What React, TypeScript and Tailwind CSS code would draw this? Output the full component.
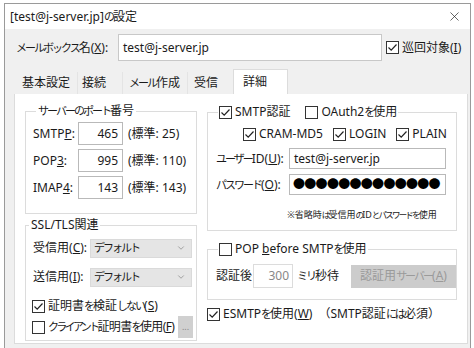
import { ChevronDown, X } from "lucide-react";

const FONT = "font-['Noto_Sans','Noto_Sans_CJK_JP',sans-serif]";
const KANA = "text-[11px] tracking-[-2px]";

// kana runs are drawn narrower, as in the Meiryo UI dialog font
function J({ t, k = KANA }: { t: string; k?: string }) {
  const parts = t.split(/([\u3040-\u30ff]+)/);
  return (
    <>
      {parts.map((p, i) =>
        i % 2 ? (
          <span key={i} className={k}>
            {p}
          </span>
        ) : (
          p
        )
      )}
    </>
  );
}

function Check({ on }: { on?: boolean }) {
  return (
    <span className="w-[13px] h-[13px] border border-[#333] bg-white flex items-center justify-center shrink-0">
      {on && (
        <svg width="11" height="11" viewBox="0 0 11 11">
          <path d="M1.5 5.5 L4.2 8.2 L9.5 2.5" fill="none" stroke="#222" strokeWidth="1.2" />
        </svg>
      )}
    </span>
  );
}

function CheckLabel({ on, children, className = "" }: { on?: boolean; children: React.ReactNode; className?: string }) {
  return (
    <span className={`flex items-center gap-[3px] ${className}`}>
      <Check on={on} />
      <span>{children}</span>
    </span>
  );
}

const PORTS = [
  { label: "SMTP", key: "P", value: "465", std: "25" },
  { label: "POP", key: "3", value: "995", std: "110" },
  { label: "IMAP", key: "4", value: "143", std: "143" },
];

const TABS = [
  { t: "基本設定", cls: "w-[62px] pl-[7px]" },
  { t: "接続", cls: "w-[45px] pl-[4px] border-l" },
  { t: "メール作成", cls: "w-[65px] pl-[6px] border-l" },
  { t: "受信", cls: "w-[46px] pl-[6px] border-l" },
];

function Select({ label, accel }: { label: string; accel: string }) {
  return (
    <div className="flex items-center h-[24px]">
      <span className="w-[64px] pl-[7px]">
        {label}(<u>{accel}</u>):
      </span>
      <div className="flex-1 h-[19px] bg-[#e5e5e5] border border-[#dadada] flex items-center justify-between pl-[3px] pr-[5px]">
        <span>
          <J t="デフォルト" />
        </span>
        <ChevronDown size={10} strokeWidth={1.5} className="text-[#777]" />
      </div>
    </div>
  );
}

export default function App() {
  return (
    <div
      className={`w-[474px] h-[348px] bg-white overflow-hidden pt-[3px] pl-[4px] text-[12px] leading-[16px] whitespace-nowrap text-[#1a1a1a] ${FONT}`}
    >
      <div className="w-[467px] h-[360px] border border-[#9a9a9a] flex flex-col">
        {/* title bar */}
        <div className="h-[25px] shrink-0 bg-white flex items-center justify-between pl-[5px] pr-[8px]">
          <span>
            <J t="[test@j-server.jp]の設定" />
          </span>
          <X size={15} strokeWidth={1.1} className="text-[#222]" />
        </div>

        <div className="flex-1 bg-[#f0f0f0] pl-[10px] pr-[2px] pt-[5px]">
          {/* mailbox name */}
          <div className="flex items-center">
            <span className="w-[103px] pl-[1px]">
              <J t="メールボックス名" />(<u>X</u>):
            </span>
            <div className="w-[264px] h-[27px] bg-white border border-[#c8c8c8] flex items-center pl-[4px]">
              test@j-server.jp
            </div>
            <CheckLabel on className="ml-[4px]">
              巡回対象(<u>I</u>)
            </CheckLabel>
          </div>

          {/* tabs */}
          <div className="flex items-end h-[25px] mt-[8px]">
            {TABS.map((tab) => (
              <div key={tab.t} className={`h-[22px] flex items-center border-[#e4e4e4] ${tab.cls}`}>
                <J t={tab.t} />
              </div>
            ))}
            <div className="h-[25px] w-[55px] bg-white flex items-center pl-[9px] border-t border-x border-[#dcdcdc]">
              詳細
            </div>
          </div>

          {/* panel */}
          <div className="h-[250px] -ml-[1px] bg-white border border-[#dcdcdc] border-t-0 flex gap-[10px] px-[10px] pt-[9px]">
            {/* left column */}
            <div className="w-[172px] shrink-0 flex flex-col gap-[3px]">
              <fieldset className="border border-[#dcdcdc] h-[111px] px-[7px]">
                <legend className="ml-[3px] px-[2px]">
                  <J t="サーバーのポート番号" />
                </legend>
                <div className="flex flex-col gap-[4px] pt-[3px]">
                  {PORTS.map((p) => (
                    <div key={p.label} className="flex items-center h-[23px]">
                      <span className="w-[45px]">
                        {p.label}
                        <u>{p.key}</u>:
                      </span>
                      <span className="w-[45px] h-[23px] border border-[#b9b9b9] bg-white flex items-center justify-end pr-[4px]">
                        {p.value}
                      </span>
                      <span className="ml-[5px]">(標準: {p.std})</span>
                    </div>
                  ))}
                </div>
              </fieldset>

              <fieldset className="border border-[#dcdcdc] h-[124px] pr-[3px]">
                <legend className="ml-[3px] px-[2px]">SSL/TLS関連</legend>
                <div className="flex flex-col gap-[5px] pt-[3px] pr-[1px]">
                  <Select label="受信用" accel="C" />
                  <Select label="送信用" accel="I" />
                </div>
                <div className="flex flex-col mt-[7px] pl-[6px]">
                  <CheckLabel on className="h-[20px]">
                    <J t="証明書を検証しない" />(<u>S</u>)
                  </CheckLabel>
                  <div className="flex items-center justify-between h-[22px]">
                    <CheckLabel className="tracking-[-0.6px]">
                      <J t="クライアント証明書を使用" k="text-[11px] tracking-[-2.7px]" />
                      (<u>F</u>)
                    </CheckLabel>
                    <span className="w-[15px] h-[22px] shrink-0 bg-[#d0d0d0] text-[#888] text-[9px] flex items-center justify-center">
                      ...
                    </span>
                  </div>
                </div>
              </fieldset>
            </div>

            {/* right column */}
            <div className="w-[250px] shrink-0 flex flex-col">
              <fieldset className="border border-[#dcdcdc] h-[127px] mt-[1px]">
                <legend className="ml-[10px] px-[1px]">
                  <span className="flex items-center gap-[15px]">
                    <CheckLabel on>SMTP認証</CheckLabel>
                    <CheckLabel>
                      <J t="OAuth2を使用" />
                    </CheckLabel>
                  </span>
                </legend>
                <div className="flex items-center gap-[10px] pl-[35px] h-[20px] mt-[4px]">
                  <CheckLabel on>CRAM-MD5</CheckLabel>
                  <CheckLabel on>LOGIN</CheckLabel>
                  <CheckLabel on>PLAIN</CheckLabel>
                </div>
                <div className="flex flex-col gap-[5px] mt-[4px] pl-[8px]">
                  <div className="flex items-center">
                    <span className="w-[73px]">
                      <J t="ユーザー" />
                      ID(<u>U</u>):
                    </span>
                    <span className="w-[157px] h-[21px] border border-[#b9b9b9] bg-white flex items-center pl-[4px]">
                      test@j-server.jp
                    </span>
                  </div>
                  <div className="flex items-center">
                    <span className="w-[73px]">
                      <J t="パスワード" />(<u>O</u>):
                    </span>
                    <span className="w-[157px] h-[21px] border border-[#b9b9b9] bg-white flex items-center pl-[3px] text-[12px] tracking-[-0.7px] text-black">
                      ●●●●●●●●●●●●●
                    </span>
                  </div>
                </div>
                <div className="text-center text-[9px] pl-[60px] mt-[12px]">
                  <J t="※省略時は受信用のIDとパスワードを使用" k="text-[8.5px] tracking-[-1.8px]" />
                </div>
              </fieldset>

              <fieldset className="border border-[#dcdcdc] h-[59px] mt-[10px]">
                <legend className="ml-[10px] px-[1px]">
                  <CheckLabel>
                    POP <u>b</u>efore SMTP<J t="を" />
                    使用
                  </CheckLabel>
                </legend>
                <div className="flex items-center pl-[8px] mt-[7px]">
                  <span className="w-[37px]">認証後</span>
                  <span className="w-[40px] h-[24px] border border-[#dcdcdc] bg-white text-[#888] flex items-center justify-end pr-[3px]">
                    300
                  </span>
                  <span className="ml-[4px]">
                    <J t="ミリ秒待" />
                  </span>
                  <span className="ml-[12px] w-[105px] h-[23px] bg-[#cccccc] text-[#9a9a9a] flex items-center justify-center">
                    <J t="認証用サーバー" />(<u>A</u>)
                  </span>
                </div>
              </fieldset>

              <CheckLabel on className="mt-[6px]">
                ESMTP<J t="を" />
                使用(<u>W</u>)　（SMTP認証<J t="には" />
                必須）
              </CheckLabel>
            </div>
          </div>
        </div>
      </div>
    </div>
  );
}
